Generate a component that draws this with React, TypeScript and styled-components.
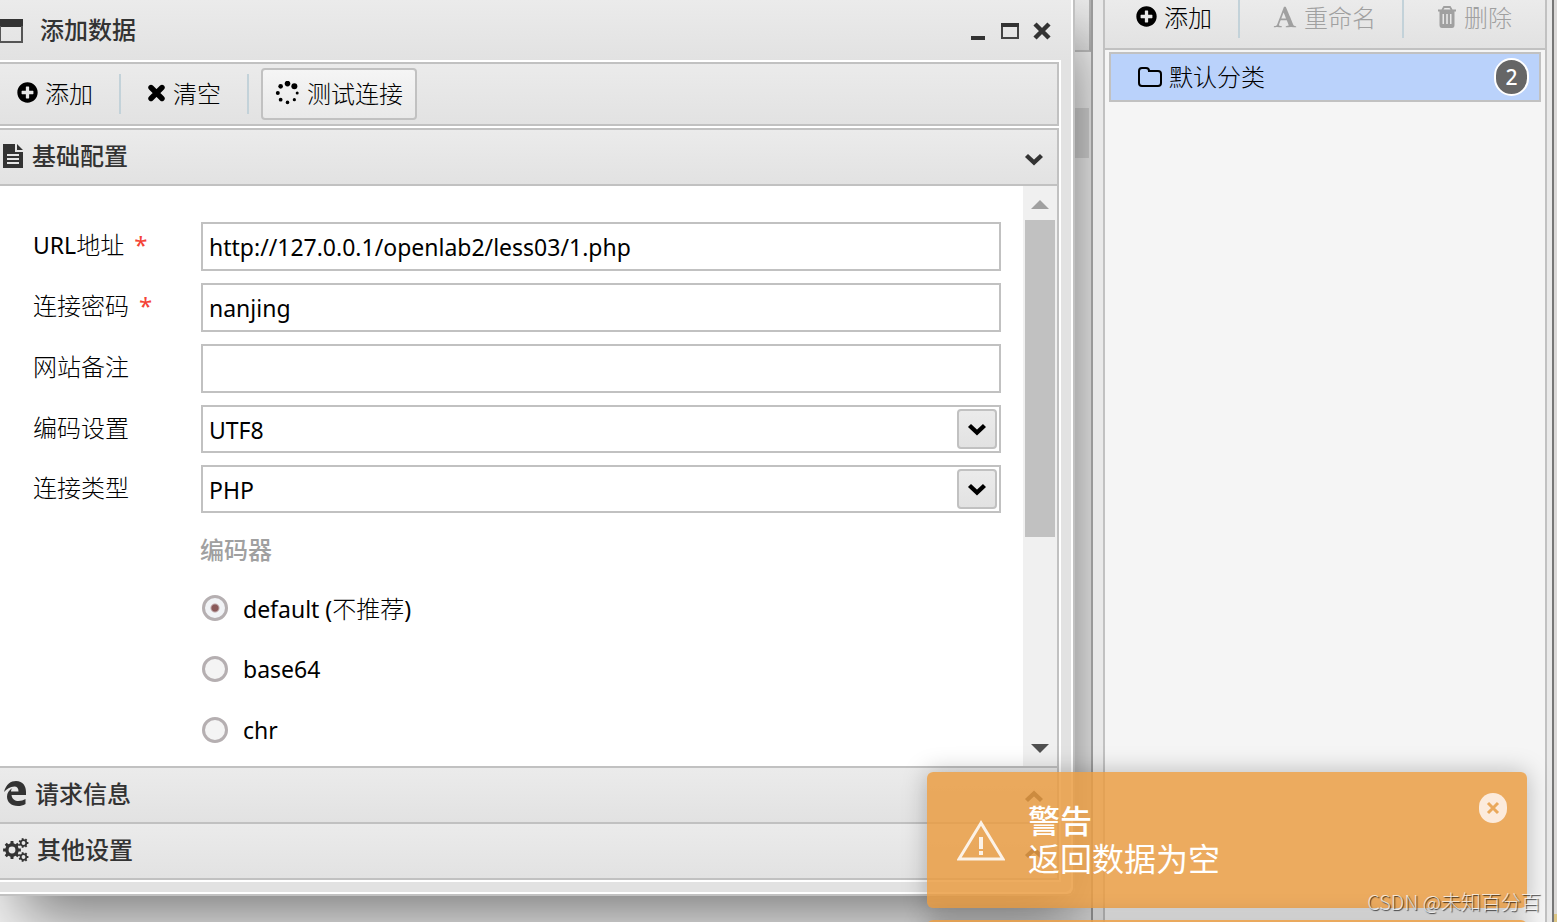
import React from 'react';
import styled, { createGlobalStyle, css } from 'styled-components';
import { FaPlusCircle } from 'react-icons/fa';

const sans = '"Noto Sans", "Noto Sans CJK SC", sans-serif';
const cjk = '"Noto Sans CJK SC", sans-serif';
const line = '#c1c1c1';
const bar = 'linear-gradient(#ebebeb, #e2e2e2)';

const GlobalStyle = createGlobalStyle`
  *, *::before, *::after { box-sizing: border-box; }
  body { margin: 0; font-family: ${sans}; color: #000; overflow: hidden; }
  button, input, select { font: inherit; color: inherit; }
  svg { flex: none; }
`;

const Page = styled.div`
  position: relative;
  display: flex;
  height: 100vh;
  overflow: hidden;
  background: #e9e9e9;
`;

const Workspace = styled.main`
  position: relative;
  flex: 1;
  min-width: 0;
  background: #f5f5f5;
  border-right: 2px solid #999;
  overflow: hidden;
`;

const GridHead = styled.div`
  height: 52px;
  background: ${bar};
  border-right: 2px solid #b4b4b4;
  border-bottom: 2px solid ${line};
`;

const GridThumb = styled.div`
  width: 14px;
  height: 50px;
  margin: 56px 2px 0 auto;
  background: #dadada;
`;

const Dialog = styled.section`
  position: absolute;
  top: 0;
  left: 0;
  right: 16px;
  display: flex;
  flex-direction: column;
  background: linear-gradient(#ebebeb, #e2e2e2 60px);
  border: solid ${line};
  border-width: 0 2px 2px 0;
  border-radius: 0 0 8px 0;
  box-shadow: inset -2px -2px #fff, 12px 30px 60px -8px rgba(0, 0, 0, 0.5);
  padding: 0 12px 12px 0;
`;

const TitleBar = styled.header`
  display: flex;
  align-items: center;
  height: 60px;
  gap: 16px;
  padding: 2px 7px 0 0;
  color: #333;
`;

const Title = styled.h1`
  flex: 1;
  margin: 0;
  padding-bottom: 4px;
  font: 500 24px/36px ${cjk};
`;

const TitleActions = styled.div`
  display: flex;
  gap: 8px;
`;

const IconButton = styled.button`
  display: flex;
  align-items: center;
  justify-content: center;
  min-width: 24px;
  height: 24px;
  padding: 0;
  border: 0;
  background: none;
`;

const DialogBody = styled.div`
  display: flex;
  flex-direction: column;
  gap: 2px;
  padding: 2px 2px 2px 0;
  background: #fff;
`;

const Toolbar = styled.div`
  display: flex;
  align-items: center;
  height: 64px;
  padding: 0 3px;
  background: ${bar};
  border: solid ${line};
  border-width: 2px 2px 2px 0;
`;

const ToolButton = styled.button<{ $active?: boolean }>`
  display: flex;
  align-items: center;
  gap: 7px;
  height: 52px;
  padding: 0 12px 3px;
  border: 2px solid transparent;
  border-radius: 4px;
  background: none;
  font: 300 24px/36px ${cjk};
  white-space: nowrap;
  ${p => p.$active && css`
    border-color: ${line};
    background: linear-gradient(#f5f5f5, #e9e9e9);
  `}
  &:disabled { color: #a0a0a0; }
`;

const Divider = styled.span`
  width: 2px;
  height: 40px;
  margin: 0 12px;
  background: #c3d2d9;
`;

const Accordion = styled.div`
  border: solid ${line};
  border-width: 2px 2px 0 0;
`;

const SectionHead = styled.button`
  display: flex;
  align-items: center;
  width: 100%;
  height: 56px;
  gap: 8px;
  padding: 0 13px 3px 2px;
  border: 0;
  border-bottom: 2px solid ${line};
  background: ${bar};
  color: #333;
  font: 500 24px/36px ${cjk};
  & > svg:last-child { margin-top: 7px; }
`;

const SectionLabel = styled.span`
  flex: 1;
  padding-bottom: 2px;
  text-align: left;
`;

const SectionBody = styled.div`
  display: flex;
  height: 582px;
  background: #fff;
  border-bottom: 2px solid ${line};
`;

const Form = styled.form`
  flex: 1;
  min-width: 0;
  display: flex;
  flex-direction: column;
  gap: 12px;
  padding: 36px 22px 0 33px;
  overflow: hidden;
`;

const Field = styled.div`
  display: grid;
  grid-template-columns: 168px 1fr;
  align-items: center;
`;

const Label = styled.label`
  padding-bottom: 3px;
  font: 300 24px/36px ${sans};
`;

const Latin = styled.span`
  font-size: 23px;
  font-weight: 400;
`;

const Required = styled.span`
  margin-left: 10px;
  color: #f44336;
  font-weight: 400;
`;

const TextInput = styled.input`
  width: 100%;
  height: 49px;
  padding: 0 6px;
  border: 2px solid ${line};
  border-radius: 0;
  background: #fff;
  font-size: 23px;
  outline: 0;
`;

const SelectBox = styled.div`
  display: grid;
  align-items: center;
  & > * { grid-area: 1 / 1; }
`;

const Select = styled.select`
  width: 100%;
  height: 48px;
  padding: 2px 6px 0;
  border: 2px solid ${line};
  border-radius: 0;
  background: #fff;
  font-size: 23px;
  appearance: none;
`;

const SelectArrow = styled.span`
  display: flex;
  align-items: center;
  justify-content: center;
  justify-self: end;
  width: 40px;
  height: 40px;
  margin-right: 4px;
  border: 2px solid ${line};
  border-radius: 4px;
  background: ${bar};
  pointer-events: none;
`;

const Encoders = styled.fieldset`
  margin: 6px 0 0 167px;
  padding: 0;
  border: 0;
`;

const Legend = styled.legend`
  padding: 0;
  margin-bottom: 10px;
  color: #a0a0a0;
  font: 500 24px/36px ${cjk};
`;

const RadioLabel = styled.label`
  display: flex;
  align-items: center;
  gap: 15px;
  height: 61px;
  padding-left: 2px;
  font-size: 24px;
  font-weight: 300;
`;

const Radio = styled.input`
  appearance: none;
  width: 26px;
  height: 26px;
  margin: 0;
  border: 3px solid #b5afb1;
  border-radius: 50%;
  background: #f4f4f4;
  &:checked {
    background: radial-gradient(circle, #8a5a5a 3px, #f1f3f6 5px);
  }
`;

const ScrollTrack = styled.div`
  display: flex;
  flex-direction: column;
  align-items: center;
  width: 34px;
  padding: 14px 0 13px;
  background: #f0f0f0;
`;

const ScrollThumb = styled.div`
  width: 30px;
  height: 317px;
  margin: 11px 0 auto;
  background: ${line};
`;

const Sidebar = styled.aside`
  display: flex;
  flex-direction: column;
  width: 444px;
  margin: 0 5px 0 10px;
  background: #f5f5f5;
  border: solid ${line};
  border-width: 0 2px;
`;

const SideTools = styled.div`
  display: flex;
  align-items: flex-start;
  height: 50px;
  padding-left: 17px;
  overflow: hidden;
  background: ${bar};
  border-bottom: 2px solid ${line};
  & > button { height: 36px; }
  & > span { height: 38px; margin-right: 19px; }
`;

const Category = styled.a`
  display: flex;
  align-items: center;
  height: 50px;
  margin: 2px 4px;
  gap: 7px;
  padding: 0 10px 0 27px;
  border: 2px solid ${line};
  background: #bad2fb;
  color: #000;
  font: 300 24px/36px ${cjk};
  text-decoration: none;
`;

const CategoryName = styled.span`
  flex: 1;
  padding-bottom: 3px;
`;

const Badge = styled.span`
  width: 35px;
  height: 38px;
  border: 2px solid #fff;
  border-radius: 18px;
  background: #666;
  color: #fff;
  font: 500 21px/34px ${sans};
  text-align: center;
`;

const PageEdge = styled.div`
  width: 5px;
  border-left: 2px solid #777;
  background: linear-gradient(#dcdad9 calc(100% - 8px), #dcc584 0);
`;

const Toasts = styled.div`
  position: absolute;
  top: 772px;
  right: 30px;
  width: 600px;
  display: flex;
  flex-direction: column;
  gap: 12px;
`;

const Toast = styled.div`
  display: flex;
  align-items: flex-start;
  height: 136px;
  padding: 21px 20px 0 30px;
  border-radius: 6px;
  background: rgba(234, 156, 66, 0.84);
  box-shadow: 0 0 24px rgba(0, 0, 0, 0.25);
  color: #fff;
  & > button { height: 30px; }
`;

const ToastText = styled.div`
  flex: 1;
  margin: 7px 0 0 23px;
  font: 400 32px/38px ${cjk};
`;

const ToastTitle = styled.strong`
  display: block;
  font-weight: 500;
`;

const Watermark = styled.div`
  position: absolute;
  right: 16px;
  bottom: 5px;
  color: rgba(255, 255, 255, 0.75);
  font: 300 20px/30px ${cjk};
  text-shadow: 1px 1px 1px rgba(0, 0, 0, 0.7);
`;

function Chevron({ up, color = '#000' }: { up?: boolean; color?: string }) {
  return (
    <svg width="20" height="14" viewBox="0 0 20 14">
      <path d={up ? 'M2.500 10.500L10 3.500l7.500 7' : 'M2.500 3.500l7.500 7 7.500-7'} fill="none" stroke={color} strokeWidth="4.400" />
    </svg>
  );
}

function WindowIcon() {
  return (
    <svg width="24" height="24" viewBox="0 0 24 24">
      <path fill="#333" d="M0 0h23v8H0z" />
      <path fill="none" stroke="#555" strokeWidth="2" d="M0 7v16h22V7" />
    </svg>
  );
}

function FileIcon() {
  return (
    <svg width="22" height="24" viewBox="0 0 22 24">
      <path fill="#333" fillRule="evenodd" d="M1 0h12v8h8v16H1zM5 10h12v2H5zM5 14h12v2H5zM5 18h12v2H5zM15 0l6 6h-6z" />
    </svg>
  );
}

function ClearIcon() {
  return (
    <svg width="19" height="18" viewBox="0 0 19 18">
      <path d="M4 3.500l11 11M15 3.500l-11 11" stroke="#000" strokeWidth="5.400" strokeLinecap="round" />
    </svg>
  );
}

function SpinnerIcon() {
  const radii = [2.8, 3, 1.5, 1.6, 1.8, 1.9, 2, 2.3];
  return (
    <svg width="25" height="24" viewBox="0 0 25 24">
      {radii.map((r, i) => {
        const a = (i * Math.PI) / 4;
        return <circle key={i} cx={12.5 + Math.sin(a) * 9.7} cy={12 - Math.cos(a) * 9.4} r={r} />;
      })}
    </svg>
  );
}

function FontIcon() {
  return (
    <svg width="24" height="24" viewBox="0 0 1792 1792">
      <path fill="currentColor" d="M789 559l-170 450q33 0 136.500 2t160.500 2q19 0 57-2-87-253-184-452zm-725 1105l2-79q23-7 56-12.500t57-10.500 49.500-14.500 44.500-29 31-50.500l237-616 280-724h128q8 14 11 21l205 480q33 78 106 257.500t114 274.500q15 34 58 144.500t72 168.500q20 45 35 57 19 15 88 29.500t84 20.500q6 38 6 57 0 5-.5 13.500t-.5 12.500q-63 0-190-8t-191-8q-76 0-215 7t-178 8q0-43 4-78l131-28q1 0 12.500-2.500t15.500-3.500 14.500-4.500 15-6.500 11-8 9-11 2.500-14q0-16-31-96.500t-72-177.500-42-100l-450-2q-26 58-76.500 195.500t-50.500 162.500q0 22 14 37.500t43.500 24.500 48.500 13.500 57 8.500 41 4q1 19 1 58 0 9-2 27-58 0-174.500-10t-174.500-10q-8 0-26.500 4t-21.500 4q-80 14-188 14z" />
    </svg>
  );
}

function EdgeIcon() {
  return (
    <svg width="25" height="25" viewBox="0 0 25 25">
      <path
        fill="#333"
        d="M2 11C4 3 9 0 14 0c7 0 10 5 10 11v3H9.500c.5 4 3.500 6 7 6 2.500 0 5-1 7-2v5c-2.500 1.500-5 2-7.500 2C9 25 5 21 5 15.500 5 12 7 9 10.500 7 9.500 8 9 9 9 10.500h7.500c0-3.500-1.500-5-4-5C8 5.500 4.500 8 2 11z"
      />
    </svg>
  );
}

function gear(cx: number, cy: number, r: number, teeth: number) {
  const points: string[] = [];
  for (let i = 0; i < teeth; i++) {
    [[-0.3, 0.76], [-0.2, 1], [0.2, 1], [0.3, 0.76]].forEach(([o, k]) => {
      const a = ((i + o) / teeth) * Math.PI * 2;
      points.push(`${(cx + Math.cos(a) * r * k).toFixed(2)} ${(cy + Math.sin(a) * r * k).toFixed(2)}`);
    });
  }
  const h = r * 0.38;
  return `M${points.join('L')}Z M${cx - h} ${cy}a${h} ${h} 0 1 0 ${h * 2} 0a${h} ${h} 0 1 0 ${-h * 2} 0Z`;
}

function GearsIcon() {
  return (
    <svg width="27" height="24" viewBox="0 0 27 24">
      <path fill="#333" fillRule="evenodd" d={gear(10, 12, 9, 8) + gear(21.5, 5, 5, 7) + gear(21.5, 19, 5, 7)} />
    </svg>
  );
}

function FolderIcon() {
  return (
    <svg width="24" height="20" viewBox="0 0 24 20">
      <path fill="none" stroke="#000" strokeWidth="2" d="M4 1h4q3 0 3 3h9q3 0 3 3v9q0 3-3 3H4q-3 0-3-3V4q0-3 3-3z" />
    </svg>
  );
}

function TrashIcon() {
  return (
    <svg width="20" height="22" viewBox="0 0 20 22">
      <path fill="currentColor" fillRule="evenodd" d="M6.500 0h7l2 3.500H19v2h-1.500V19q0 3-2.500 3H5q-2.500 0-2.500-3V5.500H1v-2h3.500zM7.500 2l-1 1.500h7l-1-1.500zM5.500 8v10H7V8zM9.200 8v10h1.600V8zM13 8v10h1.500V8z" />
    </svg>
  );
}

const encoders = [
  { name: 'default', hint: '不推荐' },
  { name: 'base64' },
  { name: 'chr' },
];

export default function App() {
  return (
    <Page>
      <GlobalStyle />
      <Workspace>
        <GridHead />
        <GridThumb />
        <Dialog aria-label="添加数据">
          <TitleBar>
            <WindowIcon />
            <Title>添加数据</Title>
            <TitleActions>
              <IconButton aria-label="最小化"><svg width="16" height="18"><path d="M1 14h14v4H1z" fill="#333" /></svg></IconButton>
              <IconButton aria-label="最大化"><svg width="18" height="16"><path d="M1 1h16v14H1z" fill="none" stroke="#444" strokeWidth="2" /><path d="M0 0h18v4H0z" fill="#333" /></svg></IconButton>
              <IconButton aria-label="关闭窗口"><svg width="18" height="18"><path d="M2 2l14 14M16 2L2 16" stroke="#333" strokeWidth="4.500" /></svg></IconButton>
            </TitleActions>
          </TitleBar>
          <DialogBody>
            <Toolbar>
              <ToolButton><FaPlusCircle size={21} />添加</ToolButton>
              <Divider />
              <ToolButton><ClearIcon />清空</ToolButton>
              <Divider />
              <ToolButton $active><SpinnerIcon />测试连接</ToolButton>
            </Toolbar>
            <Accordion>
              <SectionHead><FileIcon /><SectionLabel>基础配置</SectionLabel><Chevron color="#333" /></SectionHead>
              <SectionBody>
                <Form>
                  <Field>
                    <Label htmlFor="url"><Latin>URL</Latin>地址<Required>*</Required></Label>
                    <TextInput id="url" defaultValue="http://127.0.0.1/openlab2/less03/1.php" />
                  </Field>
                  <Field>
                    <Label htmlFor="pwd">连接密码<Required>*</Required></Label>
                    <TextInput id="pwd" defaultValue="nanjing" />
                  </Field>
                  <Field>
                    <Label htmlFor="note">网站备注</Label>
                    <TextInput id="note" />
                  </Field>
                  <Field>
                    <Label htmlFor="charset">编码设置</Label>
                    <SelectBox>
                      <Select id="charset"><option>UTF8</option></Select>
                      <SelectArrow><Chevron /></SelectArrow>
                    </SelectBox>
                  </Field>
                  <Field>
                    <Label htmlFor="type">连接类型</Label>
                    <SelectBox>
                      <Select id="type"><option>PHP</option></Select>
                      <SelectArrow><Chevron /></SelectArrow>
                    </SelectBox>
                  </Field>
                  <Encoders>
                    <Legend>编码器</Legend>
                    {encoders.map(({ name, hint }) => (
                      <RadioLabel key={name}>
                        <Radio type="radio" name="encoder" defaultChecked={name === 'default'} />
                        <span>
                          <Latin>{name}</Latin>
                          {hint && <><Latin> (</Latin>{hint}<Latin>)</Latin></>}
                        </span>
                      </RadioLabel>
                    ))}
                  </Encoders>
                </Form>
                <ScrollTrack>
                  <svg width="18" height="9"><path d="M0 9l9-9 9 9z" fill="#a0a0a0" /></svg>
                  <ScrollThumb />
                  <svg width="18" height="9"><path d="M0 0l9 9 9-9z" fill="#505050" /></svg>
                </ScrollTrack>
              </SectionBody>
              <SectionHead><EdgeIcon /><SectionLabel>请求信息</SectionLabel><Chevron up color="#333" /></SectionHead>
              <SectionHead><GearsIcon /><SectionLabel>其他设置</SectionLabel><Chevron up color="#333" /></SectionHead>
            </Accordion>
          </DialogBody>
        </Dialog>
      </Workspace>
      <Sidebar>
        <SideTools>
          <ToolButton><FaPlusCircle size={21} />添加</ToolButton>
          <Divider />
          <ToolButton disabled><FontIcon />重命名</ToolButton>
          <Divider />
          <ToolButton disabled><TrashIcon />删除</ToolButton>
        </SideTools>
        <Category href="#default">
          <FolderIcon />
          <CategoryName>默认分类</CategoryName>
          <Badge>2</Badge>
        </Category>
      </Sidebar>
      <PageEdge />
      <Toasts>
        <Toast role="alert">
          <svg width="48" height="70" viewBox="0 0 48 70">
            <path d="M24 30L2 66h44z" fill="none" stroke="#fff" strokeOpacity=".85" strokeWidth="3" />
            <path d="M22 44h4v12h-4zM22 58h4v4h-4z" fill="#fff" fillOpacity=".85" />
          </svg>
          <ToastText><ToastTitle>警告</ToastTitle>返回数据为空</ToastText>
          <IconButton aria-label="关闭">
            <svg width="28" height="30" viewBox="0 0 28 30">
              <rect width="28" height="30" rx="14" fill="#fcebdc" />
              <path d="M9 10l10 10M19 10L9 20" stroke="#eaa95c" strokeWidth="3" />
            </svg>
          </IconButton>
        </Toast>
        <Toast />
      </Toasts>
      <Watermark>CSDN @未知百分百</Watermark>
    </Page>
  );
}
